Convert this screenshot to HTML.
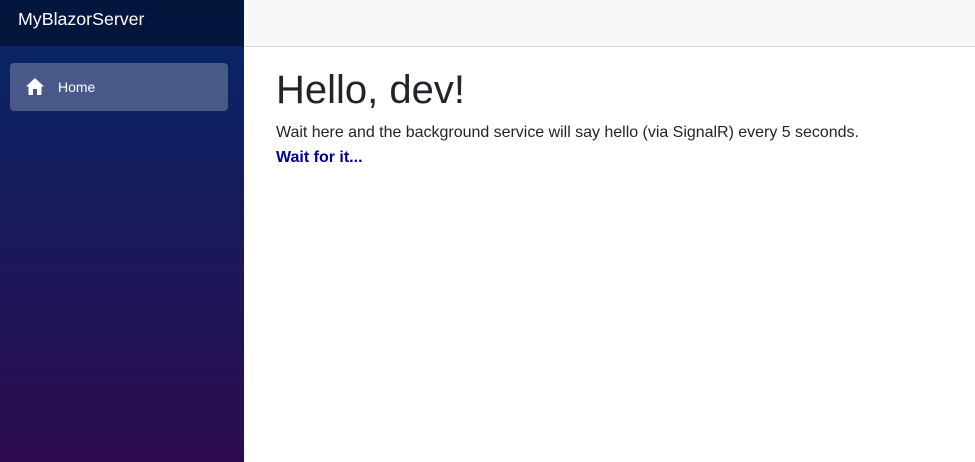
<!DOCTYPE html>
<html><head><meta charset="utf-8"><style>
*{margin:0;padding:0;box-sizing:border-box}
body{width:975px;height:462px;overflow:hidden;font-family:"Liberation Sans",Arial,sans-serif;background:#fff;position:relative}
.side{position:absolute;left:0;top:0;width:244px;height:462px;background:linear-gradient(180deg,#052767 0%,#2c0c4f 100%)}
.brand{height:46px;background:rgba(0,0,0,0.4);color:#fff;font-size:17.8px;padding-left:18px;line-height:38px}
.nav{position:absolute;left:10px;top:63px;width:218px;height:48px;background:rgba(255,255,255,0.25);border-radius:4px;color:#fff;font-size:14px}
.nav span{position:absolute;left:48px;top:16px}
.nav svg{position:absolute;left:16px;top:15px}
.top{position:absolute;left:244px;top:0;right:0;height:47px;background:#f7f8f8;border-bottom:1px solid #d6d5d5}
h1{position:absolute;left:276px;top:66px;font-size:40px;font-weight:400;color:#212529;line-height:48px}
p{position:absolute;left:276px;top:123px;font-size:16px;color:#212529;line-height:20px;letter-spacing:-0.02px}
b{position:absolute;left:276px;top:148px;font-size:16px;color:#00008b;line-height:20px}
</style></head><body>
<div class="side"><div class="brand">MyBlazorServer</div>
<div class="nav"><svg width="18" height="17" viewBox="0 0 18 17"><path d="M9 0L0 8.5h2.5V17h4.5v-6h4v6h4.5V8.5H18z" fill="#fff"/></svg><span>Home</span></div></div>
<div class="top"></div>
<h1>Hello, dev!</h1>
<p>Wait here and the background service will say hello (via SignalR) every 5 seconds.</p>
<b>Wait for it...</b>
</body></html>
